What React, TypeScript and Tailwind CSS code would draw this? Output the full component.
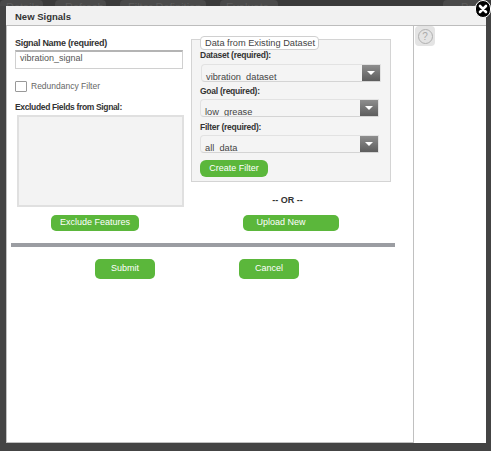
import React from 'react';

const font = { fontFamily: '"Liberation Sans", Arial, sans-serif' };

const GreenButton = ({ label, className }: { label: string; className: string }) => (
  <button className={`bg-[#5bb73b] text-white text-[9px] flex items-center justify-center ${className}`}>
    {label}
  </button>
);

const SelectField = ({ label, value, className }: { label: string; value: string; className: string }) => (
  <div className="flex flex-col">
    <div className="text-[8.5px] leading-[12px] font-bold text-[#333] tracking-[-0.25px] whitespace-nowrap">{label}</div>
    <div className={`h-[18px] flex items-stretch rounded-l-[4px] border border-[#e2e2e2] border-b-[#d4d4d4] overflow-hidden ${className}`}>
      <div className="flex-1 text-[9.25px] text-[#444] pl-[4px] pt-[5px] leading-[14px] overflow-hidden">{value}</div>
      <div className="w-[18px] bg-gradient-to-b from-[#8e8e8e] to-[#5d5d5d] flex items-center justify-center">
        <div className="w-0 h-0 border-l-[4px] border-r-[4px] border-t-[4px] border-l-transparent border-r-transparent border-t-white" />
      </div>
    </div>
  </div>
);

export default function App() {
  return (
    <div className="relative w-[491px] h-[451px] bg-[#444444] overflow-hidden" style={font}>
      {/* dimmed page behind the dialog */}
      <div className="flex h-[6px] bg-[#3a3a3a] overflow-hidden text-[11px] leading-[14px] text-[#5c5c5c]">
        <div className="w-[43px] bg-[#4a4a4a] rounded-t pl-[6px] whitespace-nowrap">Details</div>
        <div className="ml-[12px] w-[51px] bg-[#4a4a4a] rounded-t pl-[10px] whitespace-nowrap">Refresh</div>
        <div className="ml-[14px] w-[86px] bg-[#4a4a4a] rounded-t pl-[8px] whitespace-nowrap">Filter Definition</div>
        <div className="ml-[14px] w-[58px] bg-[#4a4a4a] rounded-t pl-[6px] whitespace-nowrap">Evaluate</div>
        <div className="ml-[165px] w-[40px] bg-[#4a4a4a] rounded-t pl-[18px] whitespace-nowrap">Pro</div>
      </div>

      <div className="ml-[6px] w-[480px] h-[437px] bg-white flex flex-col">
        <div className="h-[20px] bg-[#f1f1f1] border-b border-[#bdbdbd] pl-[9px] text-[9.5px] font-bold text-[#333] leading-[21px]">
          New Signals
        </div>
        <div className="flex flex-1 min-h-0">
          <div className="w-[408px] border-l border-r border-b border-[#c0c0c0] flex flex-col">
            <div className="flex pl-[8px] pt-[10px]">
              <div className="w-[168px] flex flex-col">
                <div className="text-[9px] leading-[14px] font-bold text-[#333] tracking-[-0.3px]">Signal Name (required)</div>
                <div className="h-[19px] border border-[#d0d0d0] border-t-[2px] border-t-[#b4b4b4] text-[9px] text-[#555] pl-[4px] leading-[13px]">
                  vibration_signal
                </div>
                <div className="mt-[12px] h-[11px] flex items-center gap-[4px]">
                  <div className="w-[12px] h-[11px] border border-[#999] rounded-[1px]" />
                  <span className="text-[8.5px] text-[#666]">Redundancy Filter</span>
                </div>
                <div className="mt-[9px] text-[8.5px] leading-[12px] font-bold text-[#333] tracking-[-0.35px] whitespace-nowrap">Excluded Fields from Signal:</div>
                <div className="mt-[2px] ml-[2px] w-[167px] h-[92px] bg-[#f3f3f3] border-2 border-[#e0e0e0]" />
                <GreenButton label="Exclude Features" className="mt-[8px] ml-[36px] w-[88px] h-[16px] rounded-[5px]" />
              </div>
              <div className="ml-[8px] w-[200px] flex flex-col items-center">
                <div className="relative w-[200px] h-[143px] mt-[3px] bg-[#f4f4f4] border border-[#d4d4d4] px-[8px] pt-[9px]">
                  <div className="absolute left-[8px] top-[-4px] h-[14px] w-[119px] bg-white border border-[#d0d0d0] rounded-[4px] text-[9.25px] leading-[12px] text-[#444] pl-[4px] whitespace-nowrap">
                    Data from Existing Dataset
                  </div>
                  <SelectField label="Dataset (required):" value="vibration_dataset" className="mt-[3px] ml-[1px] w-[180px]" />
                  <div className="mt-[3px]">
                    <SelectField label="Goal (required):" value="low_grease" className="mt-[2px] w-[179px]" />
                  </div>
                  <div className="mt-[4px]">
                    <SelectField label="Filter (required):" value="all_data" className="mt-[2px] w-[179px]" />
                  </div>
                  <GreenButton label="Create Filter" className="mt-[7px] w-[68px] h-[17px] rounded-[6px]" />
                </div>
                <div className="mt-[12px] ml-[-7px] text-[9px] font-bold text-[#333] leading-[12px]">-- OR --</div>
                <GreenButton label="Upload New" className="mt-[9px] w-[96px] h-[16px] rounded-[5px] pr-[20px]" />
              </div>
            </div>
            <div className="mt-[12px] ml-[4px] mr-[18px] h-[4px] bg-[#9b9da2]" />
            <div className="mt-[12px] flex">
              <GreenButton label="Submit" className="ml-[88px] w-[60px] h-[20px] rounded-[5px]" />
              <GreenButton label="Cancel" className="ml-[84px] w-[60px] h-[20px] rounded-[5px]" />
            </div>
          </div>
          <div className="flex-1 pl-[1px]">
            <div className="w-[20px] h-[20px] rounded-[4px] bg-[#e4e4e4] flex items-center justify-center">
              <div className="w-[15px] h-[15px] rounded-full border border-[#b0b0b0] text-[10px] leading-[13px] text-center text-[#aaa]">?</div>
            </div>
          </div>
        </div>
      </div>

      {/* close badge */}
      <div className="absolute left-[475px] top-[0px] w-[16px] h-[18px] rounded-full bg-black border-[1.5px] border-white flex items-center justify-center">
        <svg width="10" height="10" viewBox="0 0 10 10"><path d="M2 2 L8 8 M8 2 L2 8" stroke="white" strokeWidth="2.6" strokeLinecap="round" /></svg>
      </div>
    </div>
  );
}
